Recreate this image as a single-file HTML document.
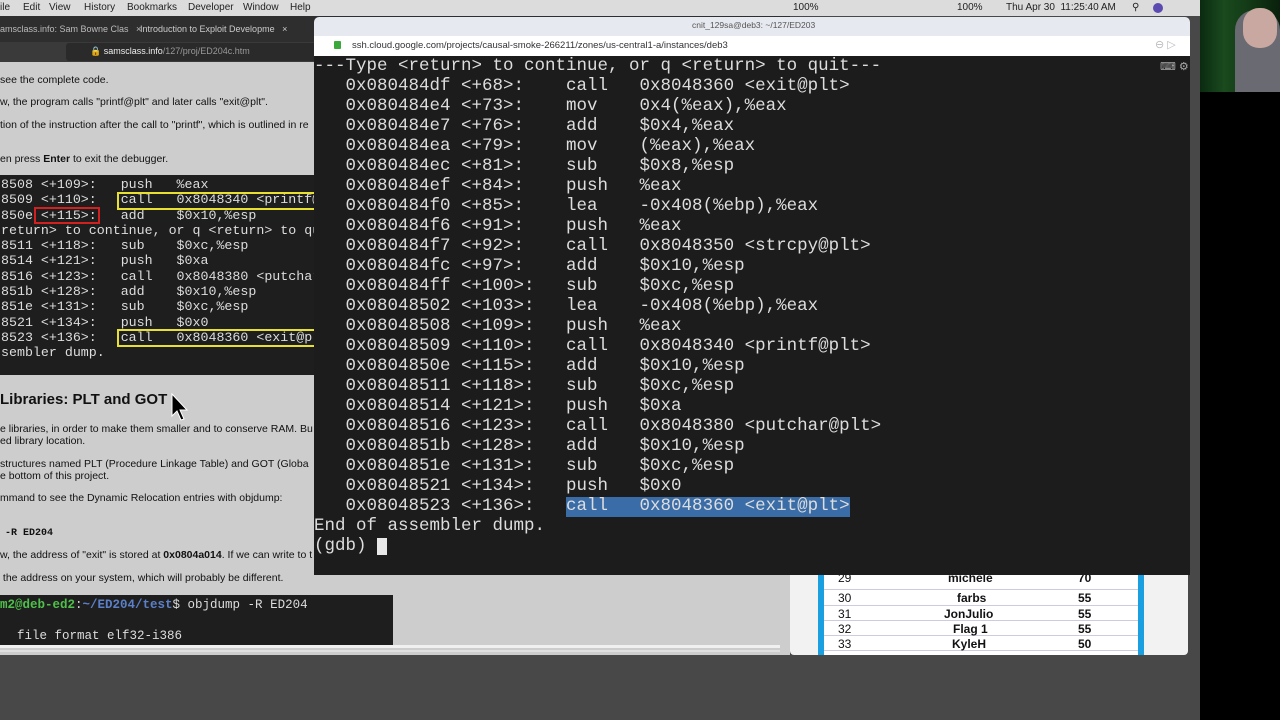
<!DOCTYPE html>
<html><head><meta charset="utf-8"><style>
*{margin:0;padding:0;box-sizing:border-box}
body{width:1280px;height:720px;overflow:hidden;background:#484848;position:relative;font-family:"Liberation Sans",sans-serif}
.a{position:absolute}
.menu{left:0;top:0;width:1200px;height:16px;background:#dcdcdc;font-size:10px;color:#222}
.menu span{position:absolute;top:2px}
.pt{font-size:10.5px;color:#111;white-space:pre;left:0}
.lt{font-family:"Liberation Mono",monospace;font-size:13.3px;color:#ddd;white-space:pre;line-height:15.3px}
.tt{font-family:"Liberation Mono",monospace;font-size:17.5px;color:#ddd;white-space:pre;line-height:20px}
</style></head><body>
<div class="a menu">
<span style="left:0">ile</span><span style="left:23px">Edit</span><span style="left:49px">View</span><span style="left:84px">History</span><span style="left:127px">Bookmarks</span><span style="left:188px">Developer</span><span style="left:243px">Window</span><span style="left:290px">Help</span>
<span style="left:793px">100%</span><span style="left:957px">100%</span><span style="left:1006px">Thu Apr 30&nbsp; 11:25:40 AM</span>
<span style="left:1132px">&#9906;</span><span style="left:1153px;width:10px;height:10px;border-radius:5px;background:#5b4bb0;top:3px"></span>
</div>
<!-- left browser -->
<div class="a" style="left:0;top:16px;width:790px;height:26px;background:#2e2e2e"></div>
<div class="a" style="left:0;top:24px;font-size:9px;color:#bbb">amsclass.info: Sam Bowne Clas&nbsp;&nbsp; ×</div>
<div class="a" style="left:140px;top:24px;font-size:9px;color:#ccc">Introduction to Exploit Developme&nbsp;&nbsp; ×</div>
<div class="a" style="left:0;top:42px;width:790px;height:20px;background:#3a3a3a"></div>
<div class="a" style="left:66px;top:43px;width:330px;height:18px;background:#2a2a2a;border-radius:3px"></div>
<div class="a" style="left:90px;top:46px;font-size:9px;color:#eee">&#128274; samsclass.info<span style="color:#999">/127/proj/ED204c.htm</span></div>
<div class="a" style="left:0;top:62px;width:790px;height:593px;background:#cdcdcd"></div>
<div class="a pt" style="top:74px">see the complete code.</div>
<div class="a pt" style="top:96px">w, the program calls "printf@plt" and later calls "exit@plt".</div>
<div class="a pt" style="top:119px">tion of the instruction after the call to "printf", which is outlined in re</div>
<div class="a pt" style="top:153px">en press <b>Enter</b> to exit the debugger.</div>
<div class="a" style="left:0;top:175px;width:314px;height:200px;background:#1e1e1e"></div>
<div class="a lt" style="left:1px;top:177px">8508 &lt;+109&gt;:   push   %eax
8509 &lt;+110&gt;:   call   0x8048340 &lt;printf@plt&gt;
850e &lt;+115&gt;:   add    $0x10,%esp
return&gt; to continue, or q &lt;return&gt; to quit---
8511 &lt;+118&gt;:   sub    $0xc,%esp
8514 &lt;+121&gt;:   push   $0xa
8516 &lt;+123&gt;:   call   0x8048380 &lt;putchar@plt&gt;
851b &lt;+128&gt;:   add    $0x10,%esp
851e &lt;+131&gt;:   sub    $0xc,%esp
8521 &lt;+134&gt;:   push   $0x0
8523 &lt;+136&gt;:   call   0x8048360 &lt;exit@plt&gt;
sembler dump.</div>
<div class="a" style="left:117px;top:192px;width:200px;height:18px;border:2px solid #e8e030"></div>
<div class="a" style="left:34px;top:207px;width:66px;height:17px;border:2px solid #d02020"></div>
<div class="a" style="left:117px;top:329px;width:200px;height:18px;border:2px solid #e8e030"></div>
<div class="a" style="left:0;top:391px;font-size:15px;font-weight:bold;color:#111">Libraries: PLT and GOT</div>
<svg class="a" style="left:170px;top:392px" width="20" height="30"><path d="M2 2 L2 24 L7 19 L11 28 L14 27 L10 18 L17 18 Z" fill="#000" stroke="#fff" stroke-width="1"/></svg>
<div class="a pt" style="top:423px;line-height:12px">e libraries, in order to make them smaller and to conserve RAM. Bu
ed library location.</div>
<div class="a pt" style="top:458px;line-height:12px">structures named PLT (Procedure Linkage Table) and GOT (Globa
e bottom of this project.</div>
<div class="a pt" style="top:492px">mmand to see the Dynamic Relocation entries with objdump:</div>
<div class="a" style="left:5px;top:528px;font-family:'Liberation Mono',monospace;font-size:10px;font-weight:bold;color:#111">-R ED204</div>
<div class="a pt" style="top:549px">w, the address of "exit" is stored at <b>0x0804a014</b>. If we can write to t</div>
<div class="a pt" style="top:572px"> the address on your system, which will probably be different.</div>
<div class="a" style="left:0;top:595px;width:393px;height:50px;background:#1e1e1e"></div>
<div class="a" style="left:0;top:598px;font-family:'Liberation Mono',monospace;font-size:12.5px;color:#ddd;white-space:pre"><b style="color:#4fc04a">m2@deb-ed2</b>:<b style="color:#5b7fc8">~/ED204/test</b>$ objdump -R ED204</div>
<div class="a" style="left:17px;top:629px;font-family:'Liberation Mono',monospace;font-size:12.5px;color:#ddd;white-space:pre">file format elf32-i386</div>
<div class="a" style="left:0;top:645px;width:780px;height:3px;background:#f0f0f0"></div>
<div class="a" style="left:0;top:650px;width:780px;height:2px;background:#e0e0e0"></div>
<!-- scoreboard -->
<div class="a" style="left:790px;top:575px;width:398px;height:80px;background:#f2f2f2;border-radius:0 0 4px 4px"></div>
<div class="a" style="left:818px;top:575px;width:6px;height:80px;background:#1aa0e0"></div>
<div class="a" style="left:1138px;top:575px;width:6px;height:80px;background:#1aa0e0"></div>
<div class="a" style="left:824px;top:575px;width:314px;height:80px;background:#fff;font-size:12px;color:#111">
<div style="position:absolute;left:0;top:0;width:314px;font-weight:bold">
<div style="height:15.3px;border-bottom:1px solid #ccd;position:relative"><span style="position:absolute;left:14px;font-weight:normal;top:-4px">29</span><span style="position:absolute;left:124px;top:-4px">michele</span><span style="position:absolute;left:254px;top:-4px">70</span></div>
<div style="height:15.3px;border-bottom:1px solid #ccd;position:relative"><span style="position:absolute;left:14px;font-weight:normal;top:1px">30</span><span style="position:absolute;left:133px;top:1px">farbs</span><span style="position:absolute;left:254px;top:1px">55</span></div>
<div style="height:15.3px;border-bottom:1px solid #ccd;position:relative"><span style="position:absolute;left:14px;font-weight:normal;top:1px">31</span><span style="position:absolute;left:120px;top:1px">JonJulio</span><span style="position:absolute;left:254px;top:1px">55</span></div>
<div style="height:15.3px;border-bottom:1px solid #ccd;position:relative"><span style="position:absolute;left:14px;font-weight:normal;top:1px">32</span><span style="position:absolute;left:129px;top:1px">Flag 1</span><span style="position:absolute;left:254px;top:1px">55</span></div>
<div style="height:15.3px;border-bottom:1px solid #ccd;position:relative"><span style="position:absolute;left:14px;font-weight:normal;top:1px">33</span><span style="position:absolute;left:128px;top:1px">KyleH</span><span style="position:absolute;left:254px;top:1px">50</span></div>
</div></div>
<!-- terminal window -->
<div class="a" style="left:314px;top:17px;width:876px;height:19px;background:#e6e9f0;border-radius:5px 5px 0 0"></div>
<div class="a" style="left:692px;top:20px;font-size:8.5px;color:#555">cnit_129sa@deb3: ~/127/ED203</div>
<div class="a" style="left:314px;top:36px;width:876px;height:20px;background:#fff"></div>
<div class="a" style="left:334px;top:41px;width:7px;height:8px;background:#3aa83a;border-radius:1px"></div>
<div class="a" style="left:352px;top:40px;font-size:9.5px;color:#333">ssh.cloud.google.com/projects/causal-smoke-266211/zones/us-central1-a/instances/deb3</div>
<div class="a" style="left:1155px;top:38px;font-size:11px;color:#bbb">&#8854; &#9655;</div>
<div class="a" style="left:314px;top:56px;width:876px;height:519px;background:#1c1c1c"></div>
<div class="a" style="left:1160px;top:60px;font-size:11px;color:#aaa">&#9000; &#9881;</div>
<div class="a" style="left:566px;top:497px;width:284px;height:20px;background:#3a6da8"></div>
<div class="a tt" style="left:314px;top:56px">---Type &lt;return&gt; to continue, or q &lt;return&gt; to quit---
   0x080484df &lt;+68&gt;:    call   0x8048360 &lt;exit@plt&gt;
   0x080484e4 &lt;+73&gt;:    mov    0x4(%eax),%eax
   0x080484e7 &lt;+76&gt;:    add    $0x4,%eax
   0x080484ea &lt;+79&gt;:    mov    (%eax),%eax
   0x080484ec &lt;+81&gt;:    sub    $0x8,%esp
   0x080484ef &lt;+84&gt;:    push   %eax
   0x080484f0 &lt;+85&gt;:    lea    -0x408(%ebp),%eax
   0x080484f6 &lt;+91&gt;:    push   %eax
   0x080484f7 &lt;+92&gt;:    call   0x8048350 &lt;strcpy@plt&gt;
   0x080484fc &lt;+97&gt;:    add    $0x10,%esp
   0x080484ff &lt;+100&gt;:   sub    $0xc,%esp
   0x08048502 &lt;+103&gt;:   lea    -0x408(%ebp),%eax
   0x08048508 &lt;+109&gt;:   push   %eax
   0x08048509 &lt;+110&gt;:   call   0x8048340 &lt;printf@plt&gt;
   0x0804850e &lt;+115&gt;:   add    $0x10,%esp
   0x08048511 &lt;+118&gt;:   sub    $0xc,%esp
   0x08048514 &lt;+121&gt;:   push   $0xa
   0x08048516 &lt;+123&gt;:   call   0x8048380 &lt;putchar@plt&gt;
   0x0804851b &lt;+128&gt;:   add    $0x10,%esp
   0x0804851e &lt;+131&gt;:   sub    $0xc,%esp
   0x08048521 &lt;+134&gt;:   push   $0x0
   0x08048523 &lt;+136&gt;:   call   0x8048360 &lt;exit@plt&gt;
End of assembler dump.
(gdb) </div>
<div class="a" style="left:377px;top:538px;width:10px;height:17px;background:#e8e8e8"></div>
<!-- right strip -->
<div class="a" style="left:1200px;top:0;width:80px;height:720px;background:#000"></div>
<div class="a" style="left:1200px;top:0;width:80px;height:92px;background:linear-gradient(90deg,#0a2a10,#1a4a1e 30%,#123a16 60%,#0a200c)"></div>
<div class="a" style="left:1235px;top:10px;width:45px;height:82px;background:#6a6a72;border-radius:20px 20px 0 0"></div>
<div class="a" style="left:1243px;top:8px;width:34px;height:40px;background:#c8a8a0;border-radius:16px"></div>
</body></html>
